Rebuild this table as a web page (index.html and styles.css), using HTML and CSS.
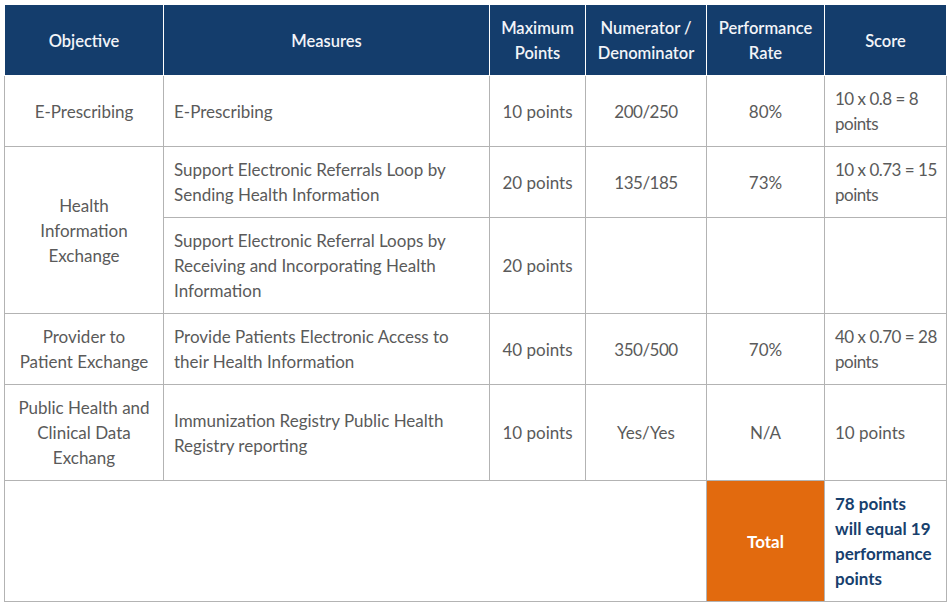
FILE: index.html
```html
<!DOCTYPE html>
<html lang="en">
<head>
<meta charset="utf-8">
<title>Promoting Interoperability Scoring</title>
<link rel="stylesheet" href="styles.css">
</head>
<body>
<table class="score-table">
  <colgroup>
    <col class="c-obj">
    <col class="c-meas">
    <col class="c-max">
    <col class="c-num">
    <col class="c-rate">
    <col class="c-score">
  </colgroup>
  <thead>
    <tr>
      <th>Objective</th>
      <th>Measures</th>
      <th>Maximum<br>Points</th>
      <th>Numerator /<br>Denominator</th>
      <th>Performance<br>Rate</th>
      <th>Score</th>
    </tr>
  </thead>
  <tbody>
    <tr>
      <td class="center">E-Prescribing</td>
      <td>E-Prescribing</td>
      <td class="center">10 points</td>
      <td class="center num">200/250</td>
      <td class="center">80%</td>
      <td class="score">10 x 0.8 = 8<br>points</td>
    </tr>
    <tr>
      <td class="center" rowspan="2">Health<br>Information<br>Exchange</td>
      <td>Support Electronic Referrals Loop by<br>Sending Health Information</td>
      <td class="center">20 points</td>
      <td class="center num">135/185</td>
      <td class="center">73%</td>
      <td class="score">10 x 0.73 = 15<br>points</td>
    </tr>
    <tr>
      <td>Support Electronic Referral Loops by<br>Receiving and Incorporating Health<br>Information</td>
      <td class="center">20 points</td>
      <td class="center"></td>
      <td class="center"></td>
      <td class="score"></td>
    </tr>
    <tr>
      <td class="center">Provider to<br>Patient Exchange</td>
      <td>Provide Patients Electronic Access to<br>their Health Information</td>
      <td class="center">40 points</td>
      <td class="center num">350/500</td>
      <td class="center">70%</td>
      <td class="score">40 x 0.70 = 28<br>points</td>
    </tr>
    <tr>
      <td class="center">Public Health and<br>Clinical Data<br>Exchang</td>
      <td>Immunization Registry Public Health<br>Registry reporting</td>
      <td class="center">10 points</td>
      <td class="center">Yes/Yes</td>
      <td class="center">N/A</td>
      <td>10 points</td>
    </tr>
    <tr class="total-row">
      <td colspan="4"></td>
      <td class="center total">Total</td>
      <td class="total-score">78 points<br>will equal 19<br>performance<br>points</td>
    </tr>
  </tbody>
</table>
</body>
</html>
```

FILE: styles.css
```css
html, body {
  margin: 0;
  padding: 0;
  background: #ffffff;
}

body {
  padding: 4px 0 0 4px;
  font-family: "Lato", "Liberation Sans", sans-serif;
  font-size: 17px;
  line-height: 25px;
  color: #5a5a5a;
}

.score-table {
  border-collapse: collapse;
  table-layout: fixed;
  width: 942px;
}

.c-obj { width: 159px; }
.c-meas { width: 326px; }
.c-max { width: 96px; }
.c-num { width: 121px; }
.c-rate { width: 118px; }
.c-score { width: 122px; }

.score-table th {
  background: #143d6c;
  color: #f2f4f8;
  font-weight: 600;
  font-size: 16.5px;
  text-align: center;
  vertical-align: middle;
  height: 50px;
  padding: 11px 4px 9px;
  border: 1px solid #ffffff;
  white-space: nowrap;
}

.score-table td {
  border: 1px solid #b3b3b3;
  padding: 10px 10px;
  vertical-align: middle;
  text-align: left;
  white-space: nowrap;
}

.score-table td.center {
  text-align: center;
  padding-left: 4px;
  padding-right: 4px;
}

.score-table td.score {
  letter-spacing: -0.5px;
}

.score-table td.num {
  letter-spacing: -0.5px;
}

.total-row td {
  height: 100px;
}

.score-table td.total {
  background: #e26a0e;
  color: #ffffff;
  font-weight: 700;
}

.score-table td.total-score {
  color: #17406d;
  font-weight: 700;
}
```
